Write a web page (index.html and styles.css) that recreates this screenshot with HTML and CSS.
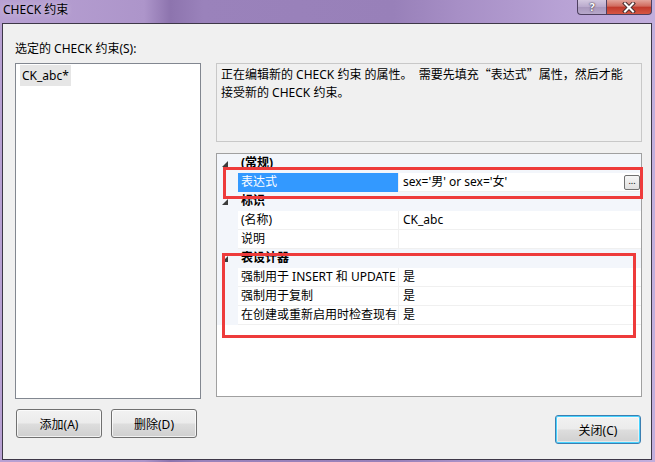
FILE: index.html
```html
<!DOCTYPE html>
<html lang="zh-CN">
<head>
    <meta charset="UTF-8">
    <title>CHECK 约束</title>
    <link rel="stylesheet" href="styles.css">
</head>
<body>
<div class="window">
    <div class="titlebar">
        <span class="title">CHECK 约束</span>
        <div class="caption-buttons">
            <span class="cap cap-help">?</span>
            <span class="cap cap-close">
                <svg width="14" height="11" viewBox="0 0 14 11">
                    <path d="M3 1.5 L11 9.5 M11 1.5 L3 9.5" stroke="#4a3030" stroke-width="4" stroke-linecap="square"/>
                    <path d="M3 1.5 L11 9.5 M11 1.5 L3 9.5" stroke="#fff" stroke-width="2" stroke-linecap="square"/>
                </svg>
            </span>
        </div>
    </div>

    <div class="client">
        <div class="label">选定的 CHECK 约束(S):</div>
        <div class="main">
            <div class="listbox">
                <span class="item">CK_abc*</span>
            </div>
            <div class="right">
                <div class="desc">正在编辑新的 CHECK 约束 的属性。&nbsp; 需要先填充<span class="cjk">“表达式”</span>属性，然后才能<br>接受新的 CHECK 约束。</div>
                <div class="grid">
                    <div class="row cat">
                        <span class="margin"><svg class="expander" width="6" height="6" viewBox="0 0 6 6"><polygon points="6,0 6,6 0,6" fill="#3c3c3c"/></svg></span>
                        <span class="name">(常规)</span>
                    </div>
                    <div class="row prop selected">
                        <span class="margin"></span>
                        <span class="name">表达式</span>
                        <span class="value">sex='男' or sex='女'<span class="ellipsis">...</span></span>
                    </div>
                    <div class="row cat">
                        <span class="margin"><svg class="expander" width="6" height="6" viewBox="0 0 6 6"><polygon points="6,0 6,6 0,6" fill="#3c3c3c"/></svg></span>
                        <span class="name">标识</span>
                    </div>
                    <div class="row prop">
                        <span class="margin"></span>
                        <span class="name">(名称)</span>
                        <span class="value">CK_abc</span>
                    </div>
                    <div class="row prop">
                        <span class="margin"></span>
                        <span class="name">说明</span>
                        <span class="value"></span>
                    </div>
                    <div class="row cat">
                        <span class="margin"><svg class="expander" width="6" height="6" viewBox="0 0 6 6"><polygon points="6,0 6,6 0,6" fill="#3c3c3c"/></svg></span>
                        <span class="name">表设计器</span>
                    </div>
                    <div class="row prop">
                        <span class="margin"></span>
                        <span class="name">强制用于 INSERT 和 UPDATE</span>
                        <span class="value">是</span>
                    </div>
                    <div class="row prop">
                        <span class="margin"></span>
                        <span class="name">强制用于复制</span>
                        <span class="value">是</span>
                    </div>
                    <div class="row prop">
                        <span class="margin"></span>
                        <span class="name">在创建或重新启用时检查现有</span>
                        <span class="value">是</span>
                    </div>
                </div>
            </div>
        </div>
        <div class="footer">
            <button class="btn">添加(A)</button>
            <button class="btn">删除(D)</button>
            <button class="btn btn-default">关闭(C)</button>
        </div>
    </div>

    <div class="mark mark-expr"></div>
    <div class="mark mark-designer"></div>
</div>
</body>
</html>
```

FILE: styles.css
```css
* {
    box-sizing: border-box;
}

body {
    margin: 0;
    font-family: "Noto Sans", "Noto Sans CJK SC", sans-serif;
    font-size: 12px;
    color: #000;
}

.cjk {
    font-family: "Noto Sans CJK SC", sans-serif;
}

.window {
    position: relative;
    width: 655px;
    height: 462px;
    overflow: hidden;
    background: linear-gradient(90deg, #b8a1d3 0%, #ad95ca 22%, #8d74ae 26%, #9a82bb 31%, #9880b9 60%, #a78fc6 70%, #b8a2d5 86%, #c2aedd 100%);
}

/* title bar */
.titlebar {
    height: 23px;
    display: flex;
    align-items: flex-start;
}

.title {
    padding: 1px 0 0 3px;
    line-height: 18px;
    text-shadow: 0 0 6px rgba(255, 255, 255, 0.6);
}

.caption-buttons {
    margin-left: auto;
    margin-right: 3px;
    display: flex;
}

.cap {
    height: 15px;
    display: flex;
    align-items: center;
    justify-content: center;
    border: 1px solid #4e4060;
    border-top: none;
}

.cap-help {
    width: 29px;
    border-radius: 0 0 0 4px;
    border-right: none;
    background: linear-gradient(#d3c8df, #b9a9cc 50%, #a998bd 51%, #b7a8ca);
    color: #fff;
    font-weight: bold;
    font-size: 11px;
    line-height: 14px;
    text-shadow: 0 0 2px #3a3040, 0 0 1px #3a3040;
}

.cap-close {
    width: 46px;
    border-radius: 0 0 4px 0;
    background: linear-gradient(#e3a49b, #d06a5d 45%, #c0392b 50%, #d65643);
}

/* client area */
.client {
    margin: 0 3px 0 2px;
    height: 437px;
    border: 1px solid #3e3848;
    background: #f0f0f0;
    padding: 17px 9px 0 12px;
}

.label {
    height: 16px;
    line-height: 16px;
    margin-bottom: 6px;
}

.main {
    display: flex;
    gap: 15px;
    height: 336px;
}

.listbox {
    width: 186px;
    border: 1px solid #828790;
    background: #fff;
    padding: 1px 4px;
}

.item {
    display: inline-block;
    background: #e6e6e6;
    padding: 0 2px;
    line-height: 21px;
}

.right {
    width: 426px;
    display: flex;
    flex-direction: column;
    gap: 11px;
}

.desc {
    height: 79px;
    border: 1px solid #c8c8c8;
    padding: 1px 4px;
    line-height: 18px;
}

/* property grid */
.grid {
    height: 244px;
    border: 1px solid #a0a0a0;
    background: #fff;
}

.row {
    display: grid;
    grid-template-columns: 21px 160px 1fr;
    height: 19px;
}

.margin {
    background: #f3f6fb;
    display: flex;
    align-items: center;
    padding-left: 5px;
}

.row .name,
.row .value {
    line-height: 18px;
    border-bottom: 1px solid #f0f0f0;
    white-space: nowrap;
    overflow: hidden;
}

.row .name {
    padding-left: 3px;
}

.row .value {
    display: flex;
    align-items: center;
    padding-left: 4px;
    border-left: 1px solid #f0f0f0;
}

.cat {
    background: #f3f6fb;
}

.cat .name {
    grid-column: 2 / 4;
    font-weight: bold;
    border-bottom-color: #f3f6fb;
}

.selected .name {
    background: #3399ff;
    color: #fff;
    border-bottom-color: #3399ff;
}

.ellipsis {
    margin-left: auto;
    margin-right: 1px;
    width: 16px;
    height: 15px;
    border: 1px solid #707070;
    border-radius: 2px;
    background: linear-gradient(#f6f6f6, #e0e0e0);
    font-size: 9px;
    line-height: 10px;
    text-align: center;
}

/* buttons */
.footer {
    display: flex;
    align-items: flex-start;
    gap: 9px;
    margin-top: 10px;
    padding-left: 1px;
}

.btn {
    width: 86px;
    height: 29px;
    border: 1px solid #707070;
    border-radius: 3px;
    background: linear-gradient(#f2f2f2 0%, #ebebeb 48%, #dddddd 52%, #cfcfcf 100%);
    box-shadow: inset 0 0 0 1px rgba(255, 255, 255, 0.7);
    font-family: inherit;
    font-size: 12px;
    color: #000;
    padding: 0;
}

.btn-default {
    margin-left: auto;
    margin-right: 1px;
    margin-top: 6px;
    border-color: #3c7fb1;
    box-shadow: inset 0 0 0 1px #48d3ff, inset 0 0 0 2px rgba(255, 255, 255, 0.5);
}

/* red highlight boxes drawn over the grid */
.mark {
    position: absolute;
    border: 3px solid #ee3b3b;
}

.mark-expr {
    left: 223px;
    top: 167px;
    width: 420px;
    height: 32px;
}

.mark-designer {
    left: 222px;
    top: 253px;
    width: 414px;
    height: 85px;
}
```
